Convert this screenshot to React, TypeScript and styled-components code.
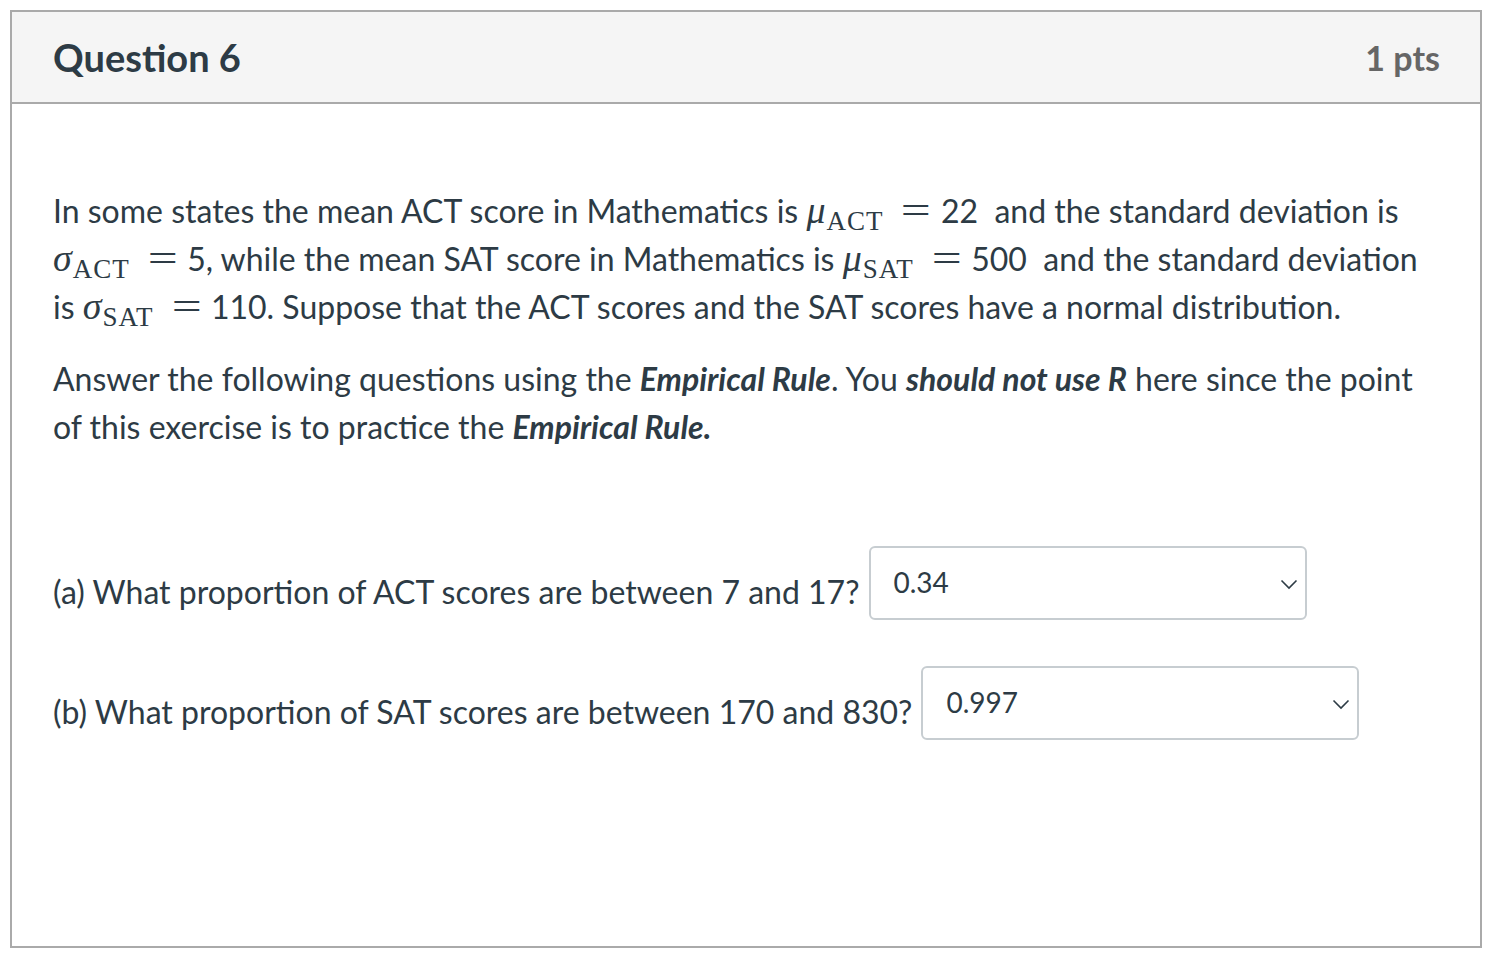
import React from 'react';
import styled, { createGlobalStyle } from 'styled-components';

const GlobalStyle = createGlobalStyle`
  body {
    margin: 0;
    background: #ffffff;
    font-family: Lato, "Open Sans", sans-serif;
    color: #2d3b45;
  }
`;

const Page = styled.div`
  padding: 10px 16px 0 10px;
`;

const Card = styled.div`
  width: 1472px;
  height: 938px;
  box-sizing: border-box;
  border: 2px solid #aaaaaa;
  display: flex;
  flex-direction: column;
`;

const Header = styled.div`
  height: 90px;
  background: #f5f5f5;
  border-bottom: 2px solid #aaaaaa;
  display: flex;
  align-items: center;
  justify-content: space-between;
  padding: 0 40px 0 41px;
`;

const Title = styled.div`
  font-size: 38px;
  font-weight: 700;
  color: #2d3b45;
`;

const Points = styled.div`
  font-size: 34px;
  font-weight: 700;
  color: #666666;
`;

const Body = styled.div`
  padding: 83px 40px 0 41px;
  font-size: 32px;
  line-height: 48px;
`;

const Para = styled.p`
  margin: 0 0 24px 0;
`;

const Sym = styled.span`
  font-family: "Liberation Serif", "DejaVu Serif", serif;
  font-style: italic;
  font-size: 38px;
  line-height: 0;
`;

const Sub = styled.span`
  font-family: "Liberation Serif", "DejaVu Serif", serif;
  font-size: 27px;
  line-height: 0;
  letter-spacing: 1px;
  position: relative;
  top: 7px;
  margin-left: 1px;
`;

const Eq = styled.span`
  display: inline-block;
  font-family: "Liberation Serif", "DejaVu Serif", serif;
  font-size: 38px;
  line-height: 0;
  transform: scaleX(1.4);
  margin: 0 14px 0 22px;
`;

const Questions = styled.div`
  margin-top: 95px;
  display: flex;
  flex-direction: column;
  gap: 46px;
`;

const Row = styled.div`
  display: flex;
  align-items: center;
  gap: 9px;
`;

const Label = styled.span`
  padding-top: 18px;
`;

const Select = styled.div`
  width: 438px;
  height: 74px;
  box-sizing: border-box;
  border: 2px solid #c7cdd1;
  border-radius: 6px;
  display: flex;
  align-items: center;
  justify-content: space-between;
  padding: 0 7px 0 23px;
  font-size: 28px;
  line-height: 1;
  color: #2d3b45;
`;

const Value = styled.span`
  margin-top: -2px;
`;

const Chevron = () => (
  <svg width="18" height="11" viewBox="0 0 18 11" style={{ marginTop: 2 }}>
    <path d="M1.5 1.5 L9 9 L16.5 1.5" fill="none" stroke="#2d3b45" strokeWidth="1.6" />
  </svg>
);

const M = ({ s, sub }: { s: string; sub: string }) => (
  <>
    <Sym>{s}</Sym>
    <Sub>{sub}</Sub>
    <Eq>=</Eq>
  </>
);

export default function App() {
  return (
    <>
      <GlobalStyle />
      <Page>
        <Card>
          <Header>
            <Title>Question 6</Title>
            <Points>1 pts</Points>
          </Header>
          <Body>
            <Para>
              In some states the mean ACT score in Mathematics is <M s="μ" sub="ACT" />22&nbsp; and the
              standard deviation is <M s="σ" sub="ACT" />5, while the mean SAT score in Mathematics is{' '}
              <M s="μ" sub="SAT" />500&nbsp; and the standard deviation is <M s="σ" sub="SAT" />110.
              Suppose that the ACT scores and the SAT scores have a normal distribution.
            </Para>
            <Para>
              Answer the following questions using the <b><i>Empirical Rule</i></b>. You{' '}
              <b><i>should not use R</i></b> here since the point of this exercise is to practice the{' '}
              <b><i>Empirical Rule.</i></b>
            </Para>
            <Questions>
              <Row>
                <Label>(a) What proportion of ACT scores are between 7 and 17?</Label>
                <Select>
                  <Value>0.34</Value>
                  <Chevron />
                </Select>
              </Row>
              <Row>
                <Label>(b) What proportion of SAT scores are between 170 and 830?</Label>
                <Select>
                  <Value>0.997</Value>
                  <Chevron />
                </Select>
              </Row>
            </Questions>
          </Body>
        </Card>
      </Page>
    </>
  );
}
